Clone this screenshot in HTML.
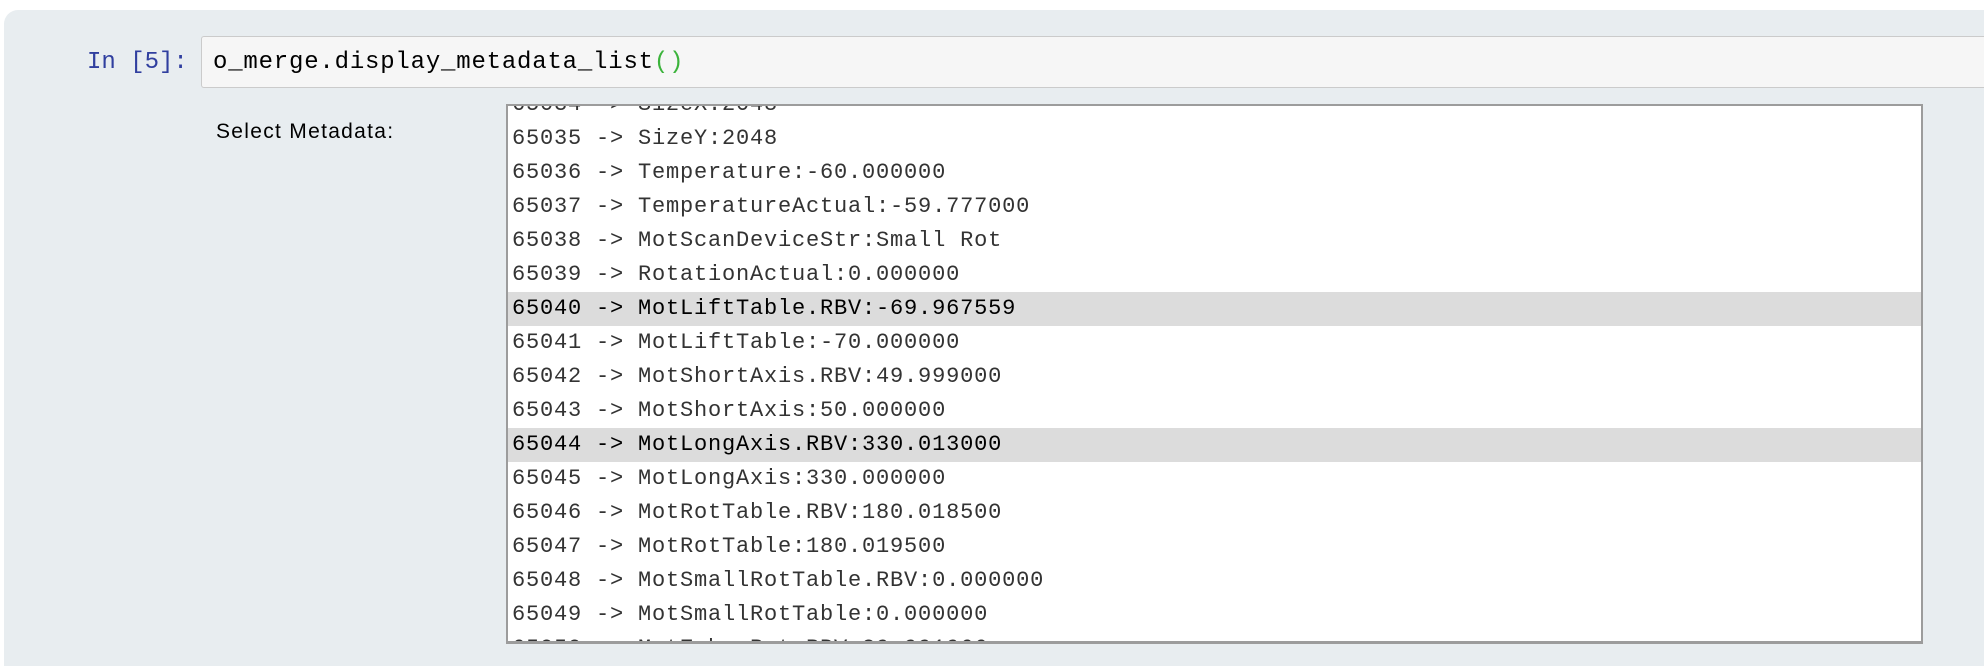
<!DOCTYPE html>
<html><head><meta charset="utf-8"><style>
html,body{margin:0;padding:0;width:1984px;height:666px;overflow:hidden;background:#fff;}
.panel{position:absolute;left:4px;top:10px;width:1980px;height:656px;background:#e8edf0;border-radius:14px 0 0 0;}
.prompt{position:absolute;left:87px;top:48px;font:24px "Liberation Mono",monospace;color:#303f9f;line-height:30px;}
.input{position:absolute;left:201px;top:36px;width:1783px;height:50px;background:#f6f6f6;border:1px solid #cbcbcb;border-right:none;border-radius:3px 0 0 3px;box-sizing:content-box;}
.code{position:absolute;left:213px;top:48px;font:24px "Liberation Mono",monospace;letter-spacing:0.8px;color:#000;line-height:30px;white-space:pre;}
.code span{color:#3bb33b;}
.label{position:absolute;left:216px;top:120px;font:21px "Liberation Sans",sans-serif;letter-spacing:1.3px;color:#000;}
.list{position:absolute;left:506px;top:104px;width:1413px;height:535px;border:2px solid #9c9c9c;border-bottom-width:3px;background:#fff;overflow:hidden;}
.rows{position:absolute;left:0;top:-18px;width:100%;}
.r{height:34px;box-sizing:border-box;padding-top:4px;line-height:30px;padding-left:4px;font:22px "Liberation Mono",monospace;letter-spacing:0.8px;color:#333;white-space:pre;}
.r.h{background:#dcdcdc;color:#000;}
</style></head><body>
<div class="panel"></div>
<div class="prompt">In [5]:</div>
<div class="input"></div>
<div class="code">o_merge.display_metadata_list<span>()</span></div>
<div class="label">Select Metadata:</div>
<div class="list"><div class="rows">
<div class="r">65034 -> SizeX:2048</div>
<div class="r">65035 -> SizeY:2048</div>
<div class="r">65036 -> Temperature:-60.000000</div>
<div class="r">65037 -> TemperatureActual:-59.777000</div>
<div class="r">65038 -> MotScanDeviceStr:Small Rot</div>
<div class="r">65039 -> RotationActual:0.000000</div>
<div class="r h">65040 -> MotLiftTable.RBV:-69.967559</div>
<div class="r">65041 -> MotLiftTable:-70.000000</div>
<div class="r">65042 -> MotShortAxis.RBV:49.999000</div>
<div class="r">65043 -> MotShortAxis:50.000000</div>
<div class="r h">65044 -> MotLongAxis.RBV:330.013000</div>
<div class="r">65045 -> MotLongAxis:330.000000</div>
<div class="r">65046 -> MotRotTable.RBV:180.018500</div>
<div class="r">65047 -> MotRotTable:180.019500</div>
<div class="r">65048 -> MotSmallRotTable.RBV:0.000000</div>
<div class="r">65049 -> MotSmallRotTable:0.000000</div>
<div class="r">65050 -> MotZaberRot.RBV:89.991966</div>
</div></div>
</body></html>
